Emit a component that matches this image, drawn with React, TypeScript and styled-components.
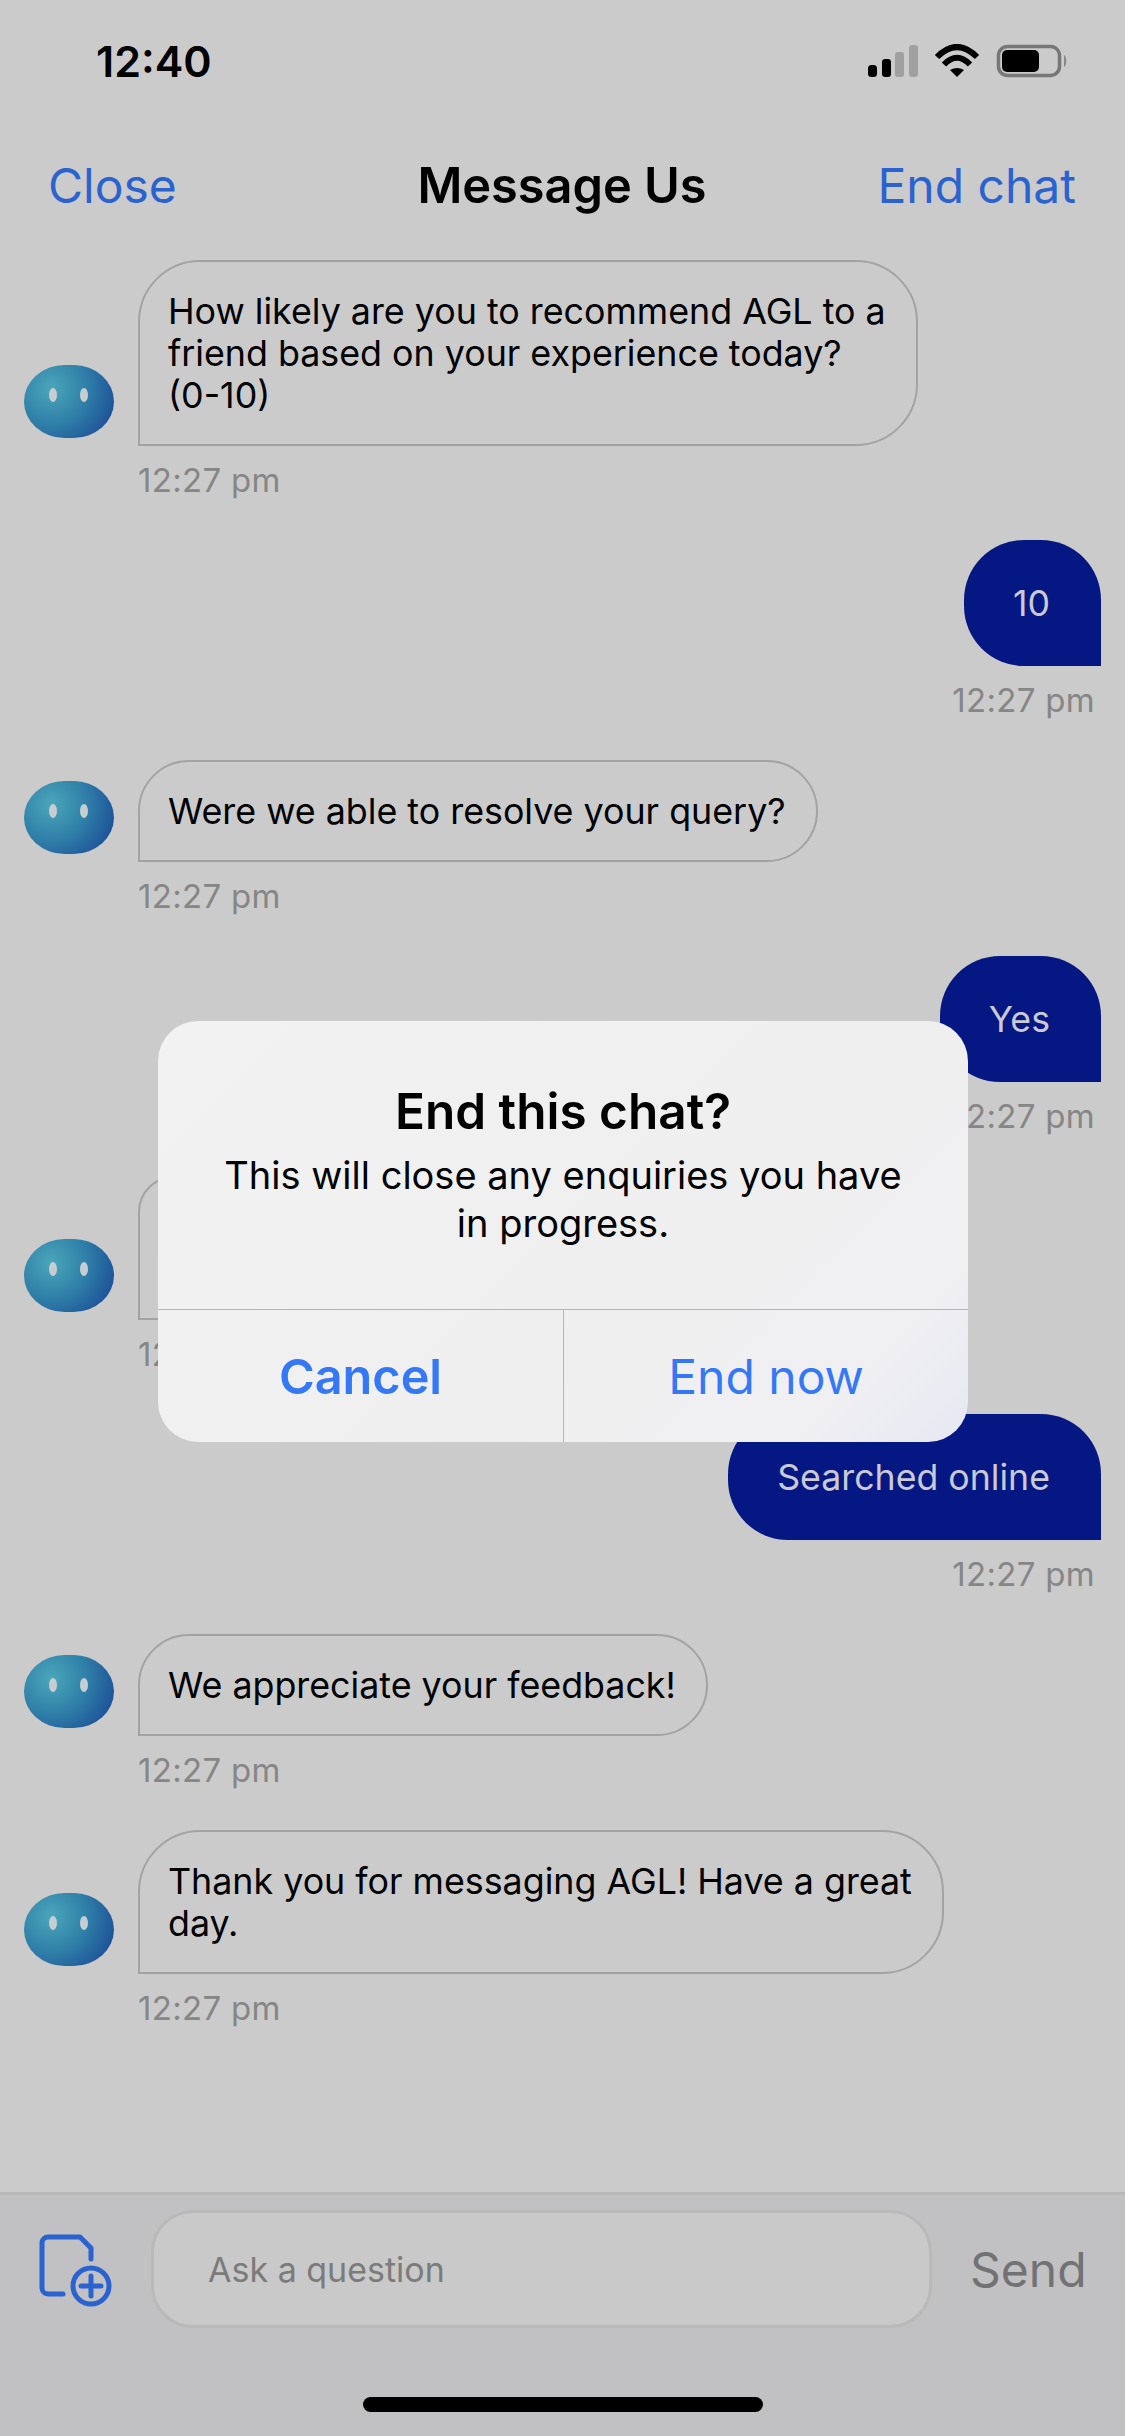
import React, { FC } from 'react';
import styled, { createGlobalStyle } from 'styled-components';

const GlobalStyle = createGlobalStyle`
  * {
    box-sizing: border-box;
  }
  html, body {
    margin: 0;
    padding: 0;
    background: #cbcbcb;
    font-family: Inter, 'Liberation Sans', sans-serif;
  }
`;

const Page = styled.div`
  position: relative;
  width: 1125px;
  height: 2436px;
  display: flex;
  flex-direction: column;
  overflow: hidden;
  background: #cbcbcb;
`;

const StatusBar = styled.div`
  height: 124px;
  display: flex;
  justify-content: space-between;
  align-items: flex-start;
  padding: 36px 56px 0 96px;
`;

const Clock = styled.span`
  font-size: 43px;
  line-height: 50px;
  font-weight: 600;
  color: #000;
`;

const StatusIcons = styled.div`
  display: flex;
  align-items: flex-start;
  margin-top: 8px;
`;

const NavBar = styled.div`
  height: 136px;
  padding: 30px 49px 0 48px;
  display: grid;
  grid-template-columns: 1fr auto 1fr;
  align-items: flex-start;
`;

const NavLink = styled.span<{ $right?: boolean }>`
  font-size: 48px;
  line-height: 64px;
  color: #2a62cf;
  text-align: ${(props) => (props.$right ? 'right' : 'left')};
`;

const NavTitle = styled.span`
  font-size: 48.7px;
  line-height: 64px;
  font-weight: 600;
  color: #000;
`;

const MessageList = styled.div`
  flex: 1;
  display: flex;
  flex-direction: column;
  gap: 40px;
  padding: 0 24px;
`;

const Group = styled.div<{ $own?: boolean }>`
  display: flex;
  flex-direction: column;
  align-items: ${(props) => (props.$own ? 'flex-end' : 'flex-start')};
`;

const BotRow = styled.div`
  display: flex;
  align-items: flex-end;
  gap: 24px;
`;

const Avatar = styled.div`
  position: relative;
  width: 90px;
  height: 73px;
  margin-bottom: 8px;
  border-radius: 45% / 50%;
  background: radial-gradient(circle at 30% 32%, #4aa6b9 0%, #2f7fa8 45%, #163f92 100%);
`;

const Eye = styled.span<{ $right?: boolean }>`
  position: absolute;
  top: 23px;
  left: ${(props) => (props.$right ? '56px' : '25px')};
  width: 8px;
  height: 14px;
  border-radius: 50%;
  background: #c6ced1;
`;

const BotBubble = styled.div`
  padding: 28px 30px 28px 28px;
  border: 2px solid #a3a3a3;
  border-radius: 62px 62px 62px 0;
  font-size: 35.8px;
  line-height: 42px;
  color: #000;
  white-space: nowrap;
`;

const UserBubble = styled.div`
  padding: 42px 51px 42px 49px;
  border-radius: 60px 60px 0 60px;
  background: #051782;
  color: #c9cad3;
  font-size: 35.7px;
  line-height: 42px;
  white-space: nowrap;
`;

const Time = styled.div<{ $own?: boolean }>`
  margin-top: 14px;
  margin-left: ${(props) => (props.$own ? '0' : '114px')};
  margin-right: ${(props) => (props.$own ? '6px' : '0')};
  font-size: 33px;
  letter-spacing: 0.3px;
  line-height: 40px;
  color: #868686;
`;

const Composer = styled.div`
  height: 244px;
  display: flex;
  flex-direction: column;
  background: #c1c1c3;
  border-top: 3px solid #b8b8b9;
`;

const ComposerRow = styled.div`
  display: flex;
  align-items: center;
  height: 118px;
  margin-top: 15px;
  padding-left: 36px;
`;

const FileIcon = styled.svg`
  flex: none;
  width: 76px;
  height: 80px;
  margin: 4px 39px 0 0;
`;

const InputBox = styled.div`
  width: 781px;
  height: 118px;
  display: flex;
  align-items: center;
  padding-left: 54px;
  background: #c9c9c9;
  border: 3px solid #b9b9b9;
  border-radius: 42px;
  font-size: 34px;
  color: #7b7b7b;
`;

const SendLabel = styled.span`
  margin-left: 38px;
  font-size: 48px;
  color: #727275;
`;

const HomeBar = styled.div`
  align-self: center;
  width: 400px;
  height: 15px;
  margin-top: 69px;
  border-radius: 8px;
  background: #000;
`;

const Dialog = styled.div`
  position: absolute;
  top: 1021px;
  left: 158px;
  width: 810px;
  height: 421px;
  display: flex;
  flex-direction: column;
  border-radius: 40px;
  overflow: hidden;
  background: linear-gradient(135deg, #f2f2f3 0%, #efeff0 60%, #f0f0f2 85%, #e6e8f3 100%);
`;

const DialogBody = styled.div`
  height: 288px;
  padding-top: 59px;
  text-align: center;
  color: #000;
`;

const DialogTitle = styled.div`
  font-size: 49.5px;
  line-height: 62px;
  font-weight: 600;
`;

const DialogText = styled.div`
  margin-top: 9px;
  font-size: 38px;
  line-height: 48px;
`;

const DialogActions = styled.div`
  flex: 1;
  display: grid;
  grid-template-columns: 1fr 1fr;
  border-top: 1.5px solid #b4b4b5;
`;

const DialogButton = styled.div<{ $primary?: boolean }>`
  display: flex;
  align-items: center;
  justify-content: center;
  font-size: ${(props) => (props.$primary ? '48.6px' : '48px')};
  font-weight: ${(props) => (props.$primary ? 600 : 400)};
  color: #3478f6;
  border-left: ${(props) => (props.$primary ? 'none' : '1.5px solid #b4b4b5')};
`;

const SignalWifiBattery: FC = () => (
  <svg width="202" height="36" viewBox="0 0 202 36" fill="none">
    <rect x="1" y="21" width="9" height="12" rx="3.5" fill="#000" />
    <rect x="15" y="15" width="9" height="18" rx="3" fill="#000" />
    <rect x="28" y="8" width="9" height="25" rx="3" fill="#a0a0a0" />
    <rect x="42" y="1" width="9" height="32" rx="3" fill="#a0a0a0" />
    <path d="M70 13 Q90 -7 110 13" stroke="#000" strokeWidth="6" />
    <path d="M77 20.5 Q90 7 103 20.5" stroke="#000" strokeWidth="6" />
    <path d="M83 26 Q90 22 97 26 L90 33 Z" fill="#000" />
    <rect x="131.5" y="2.5" width="61" height="29" rx="9" stroke="#777" strokeWidth="3.5" />
    <rect x="135" y="6" width="37" height="22" rx="5" fill="#000" />
    <path d="M197 11 C200 12 200 22 197 23 Z" fill="#888" />
  </svg>
);

const BotMessage: FC<{ children: React.ReactNode }> = ({ children }) => (
  <Group>
    <BotRow>
      <Avatar>
        <Eye />
        <Eye $right />
      </Avatar>
      <BotBubble>{children}</BotBubble>
    </BotRow>
    <Time>12:27 pm</Time>
  </Group>
);

const UserMessage: FC<{ text: string }> = ({ text }) => (
  <Group $own>
    <UserBubble>{text}</UserBubble>
    <Time $own>12:27 pm</Time>
  </Group>
);

const App: FC = () => (
  <Page>
    <GlobalStyle />
    <StatusBar>
      <Clock>12:40</Clock>
      <StatusIcons>
        <SignalWifiBattery />
      </StatusIcons>
    </StatusBar>
    <NavBar>
      <NavLink>Close</NavLink>
      <NavTitle>Message Us</NavTitle>
      <NavLink $right>End chat</NavLink>
    </NavBar>
    <MessageList>
      <BotMessage>
        How likely are you to recommend AGL to a
        <br />
        friend based on your experience today?
        <br />
        (0-10)
      </BotMessage>
      <UserMessage text="10" />
      <BotMessage>Were we able to resolve your query?</BotMessage>
      <UserMessage text="Yes" />
      <BotMessage>
        &nbsp;
        <br />
        &nbsp;
      </BotMessage>
      <UserMessage text="Searched online" />
      <BotMessage>We appreciate your feedback!</BotMessage>
      <BotMessage>
        Thank you for messaging AGL! Have a great
        <br />
        day.
      </BotMessage>
    </MessageList>
    <Composer>
      <ComposerRow>
        <FileIcon viewBox="0 0 76 80" fill="none" stroke="#2a62cf" strokeWidth="5" strokeLinecap="round" strokeLinejoin="round">
          <path d="M27 63 H12 a6 6 0 0 1 -6 -6 V12 a6 6 0 0 1 6 -6 H44 L55 17 V28" />
          <circle cx="55" cy="55" r="18" />
          <path d="M45 55 H65 M55 45 V65" />
        </FileIcon>
        <InputBox>Ask a question</InputBox>
        <SendLabel>Send</SendLabel>
      </ComposerRow>
      <HomeBar />
    </Composer>
    <Dialog>
      <DialogBody>
        <DialogTitle>End this chat?</DialogTitle>
        <DialogText>
          This will close any enquiries you have
          <br />
          in progress.
        </DialogText>
      </DialogBody>
      <DialogActions>
        <DialogButton $primary>Cancel</DialogButton>
        <DialogButton>End now</DialogButton>
      </DialogActions>
    </Dialog>
  </Page>
);

export default App;
